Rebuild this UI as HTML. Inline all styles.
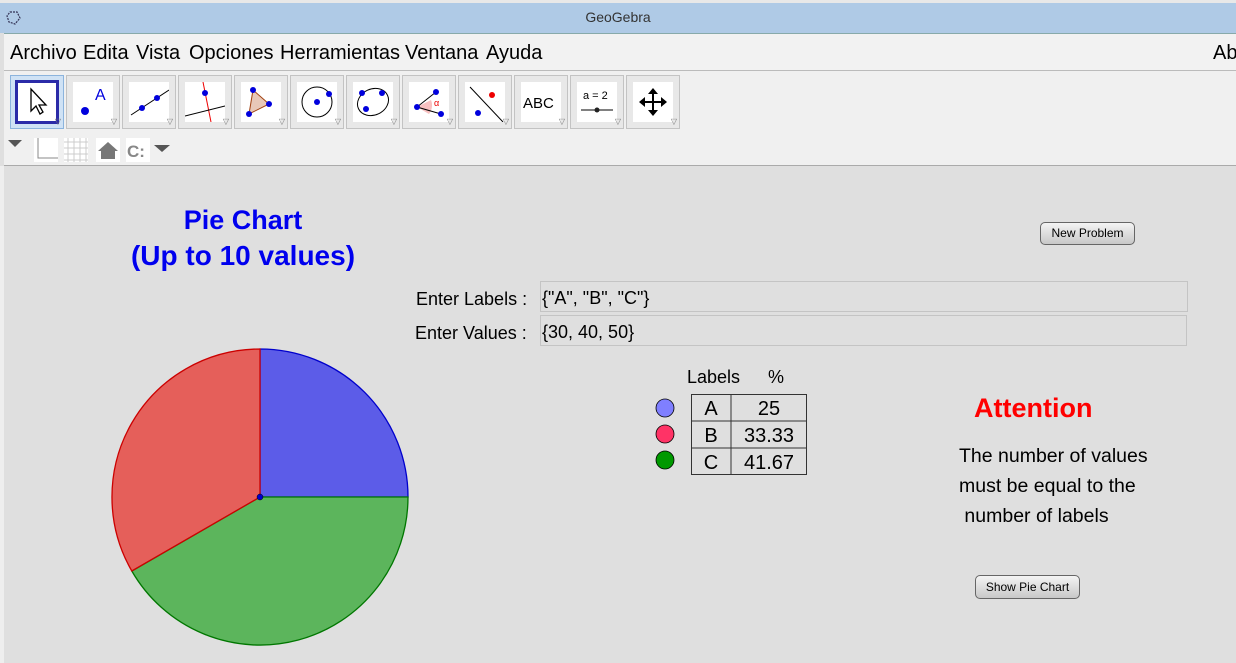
<!DOCTYPE html>
<html><head><meta charset="utf-8"><style>
*{margin:0;padding:0;box-sizing:border-box}
body{width:1236px;height:663px;overflow:hidden;background:#dfdfdf;font-family:"Liberation Sans",sans-serif;position:relative}
.a{position:absolute}
.m{position:absolute;top:42px;font-size:20px;color:#000}
.tb{position:absolute;top:75px;width:54px;height:54px;border:1px solid #c3c3c3;background:#e8e8e8}
.tb .in{position:absolute;left:6px;top:6px;width:40px;height:40px;background:#fff}
.tb .tri{position:absolute;right:2px;bottom:2px;font-size:8px;color:#777}
.tb svg{position:absolute;left:6px;top:6px}
</style></head><body>
<div class="a" style="left:0;top:0;width:1236px;height:33px;background:#afcae6;border-top:3px solid #e8e8e8"></div>
<div class="a" style="left:0;top:9px;width:1236px;text-align:center;font-size:14px;color:#333">GeoGebra</div>
<svg class="a" style="left:6px;top:10px" width="16" height="16"><polygon points="4,2 11,2 14,8 9,14 3,12 1,6" fill="none" stroke="#335" stroke-width="1.2" stroke-dasharray="2 1"/></svg>
<div class="a" style="left:4px;top:33px;width:1232px;height:37px;background:#f2f2f2;border-top:1px solid #8aa"></div>
<span class="m" style="left:10px">Archivo</span><span class="m" style="left:83px">Edita</span><span class="m" style="left:136px">Vista</span><span class="m" style="left:189px">Opciones</span><span class="m" style="left:280px">Herramientas</span><span class="m" style="left:405px">Ventana</span><span class="m" style="left:486px">Ayuda</span>
<span class="m" style="left:1213px">Ab</span>
<div class="a" style="left:4px;top:70px;width:1232px;height:62px;background:#f0f0f0;border-top:1px solid #bbb"></div>
<div class="tb" style="left:10px;background:#cfe2f5;border-color:#8cb4dd"><div class="in" style="left:4px;top:4px;width:44px;height:44px;border:3px solid #2b2ba8"></div><svg width="40" height="40" style="left:6px;top:6px"><path d="M14,7 L14,29 L19,24 L23,32 L26,30 L22,23 L29,23 Z" fill="#fff" stroke="#000" stroke-width="1.3"/></svg><span class="tri">▽</span></div>
<div class="tb" style="left:66px"><div class="in"></div><svg width="40" height="40"><circle cx="12" cy="29" r="4" fill="#00d"/><text x="22" y="18" font-size="16" fill="#00d" font-family="Liberation Sans">A</text></svg><span class="tri">▽</span></div>
<div class="tb" style="left:122px"><div class="in"></div><svg width="40" height="40"><line x1="2" y1="33" x2="40" y2="8" stroke="#000"/><circle cx="13" cy="26" r="3" fill="#00d"/><circle cx="28" cy="16" r="3" fill="#00d"/></svg><span class="tri">▽</span></div>
<div class="tb" style="left:178px"><div class="in"></div><svg width="40" height="40"><line x1="18" y1="0" x2="26" y2="40" stroke="#e00"/><line x1="0" y1="34" x2="40" y2="24" stroke="#000"/><circle cx="20" cy="11" r="3" fill="#00d"/></svg><span class="tri">▽</span></div>
<div class="tb" style="left:234px"><div class="in"></div><svg width="40" height="40"><polygon points="12,8 28,22 8,32" fill="#e8c8b8" stroke="#a04010"/><circle cx="12" cy="8" r="3" fill="#00d"/><circle cx="28" cy="22" r="3" fill="#00d"/><circle cx="8" cy="32" r="3" fill="#00d"/></svg><span class="tri">▽</span></div>
<div class="tb" style="left:290px"><div class="in"></div><svg width="40" height="40"><circle cx="20" cy="20" r="15" fill="none" stroke="#000"/><circle cx="20" cy="20" r="3" fill="#00d"/><circle cx="32" cy="12" r="3" fill="#00d"/></svg><span class="tri">▽</span></div>
<div class="tb" style="left:346px"><div class="in"></div><svg width="40" height="40"><ellipse cx="20" cy="20" rx="16" ry="13" fill="none" stroke="#000" transform="rotate(-25 20 20)"/><circle cx="9" cy="11" r="3" fill="#00d"/><circle cx="29" cy="11" r="3" fill="#00d"/><circle cx="13" cy="27" r="3" fill="#00d"/></svg><span class="tri">▽</span></div>
<div class="tb" style="left:402px"><div class="in"></div><svg width="40" height="40"><path d="M8,25 L20,32 A14,14 0 0 0 22,18 Z" fill="#f8c0c0"/><polyline points="27,10 8,25 32,32" fill="none" stroke="#000"/><circle cx="27" cy="10" r="3" fill="#00d"/><circle cx="8" cy="25" r="3" fill="#00d"/><circle cx="32" cy="32" r="3" fill="#00d"/><text x="25" y="24" font-size="9" fill="#e00">α</text></svg><span class="tri">▽</span></div>
<div class="tb" style="left:458px"><div class="in"></div><svg width="40" height="40"><line x1="5" y1="5" x2="38" y2="40" stroke="#000"/><circle cx="27" cy="13" r="3" fill="#e00"/><circle cx="13" cy="31" r="3" fill="#00d"/></svg><span class="tri">▽</span></div>
<div class="tb" style="left:514px"><div class="in"></div><svg width="40" height="40"><text x="2" y="26" font-size="15" font-family="Liberation Sans">ABC</text></svg><span class="tri">▽</span></div>
<div class="tb" style="left:570px"><div class="in"></div><svg width="40" height="40"><text x="6" y="17" font-size="11" font-family="Liberation Sans">a = 2</text><line x1="4" y1="28" x2="36" y2="28" stroke="#000"/><circle cx="20" cy="28" r="2.5" fill="#222"/></svg><span class="tri">▽</span></div>
<div class="tb" style="left:626px"><div class="in"></div><svg width="40" height="40"><path d="M20,6 L25,12 L21,12 L21,19 L28,19 L28,15 L34,20 L28,25 L28,21 L21,21 L21,28 L25,28 L20,34 L15,28 L19,28 L19,21 L12,21 L12,25 L6,20 L12,15 L12,19 L19,19 L19,12 L15,12 Z" fill="#000"/></svg><span class="tri">▽</span></div>
<div class="a" style="left:4px;top:132px;width:1232px;height:34px;background:#f0f0f0;border-bottom:1px solid #aaa"></div>
<svg class="a" style="left:8px;top:138px" width="170" height="24"><polygon points="0,2 14,2 7,9" fill="#555"/><rect x="26" y="0" width="24" height="24" fill="#fff"/><polyline points="30,0 30,20 50,20" fill="none" stroke="#888"/><rect x="56" y="0" width="24" height="24" fill="#fff"/><path d="M60,0v24M66,0v24M72,0v24M78,0v24M56,4h24M56,10h24M56,16h24M56,22h24" stroke="#ccc"/><rect x="88" y="0" width="24" height="24" fill="#fff"/><path d="M100,4 L110,13 L107,13 L107,21 L93,21 L93,13 L90,13 Z" fill="#777"/><rect x="118" y="0" width="24" height="24" fill="#fff"/><text x="119" y="19" font-size="17" font-weight="bold" fill="#888" font-family="Liberation Sans">C:</text><polygon points="146,7 162,7 154,14" fill="#555"/></svg>
<div class="a" style="left:0;top:166px;width:4px;height:497px;background:#eee"></div>
<div class="a" style="left:90px;top:202px;width:306px;text-align:center;color:#0000ee;font-weight:bold;font-size:27px;line-height:36px">Pie Chart<br><span style="font-size:28px">(Up to 10 values)</span></div>
<svg class="a" style="left:0;top:0" width="420" height="663"><path d="M260,497 L260,349 A148,148 0 0 1 408,497 Z" fill="#5c5ce8" stroke="#0000cc" stroke-width="1.3"/><path d="M260,497 L408,497 A148,148 0 0 1 131.8,571 Z" fill="#5cb55c" stroke="#007700" stroke-width="1.3"/><path d="M260,497 L131.8,571 A148,148 0 0 1 260,349 Z" fill="#e55f5a" stroke="#cc0000" stroke-width="1.3"/><circle cx="260" cy="497" r="3" fill="#00c" stroke="#000" stroke-width=".5"/></svg>
<div class="a" style="left:1040px;top:222px;width:95px;height:23px;border:1px solid #666;border-radius:5px;background:linear-gradient(#f4f4f4,#c8c8c8);font-size:12px;text-align:center;line-height:21px">New Problem</div>
<div class="a" style="left:416px;top:289px;font-size:18px">Enter Labels :</div>
<div class="a" style="left:415px;top:323px;font-size:18px">Enter Values :</div>
<div class="a" style="left:540px;top:281px;width:648px;height:31px;border:1px solid #c4c4c4;font-size:18px;line-height:33px;padding-left:1px">{"A", "B", "C"}</div>
<div class="a" style="left:540px;top:315px;width:647px;height:31px;border:1px solid #c4c4c4;font-size:18px;line-height:33px;padding-left:1px">{30, 40, 50}</div>
<div class="a" style="left:687px;top:367px;font-size:18px">Labels</div>
<div class="a" style="left:768px;top:367px;font-size:18px">%</div>
<svg class="a" style="left:650px;top:394px" width="170" height="84"><circle cx="15" cy="14" r="9" fill="#7f7fff" stroke="#000" stroke-width=".8"/><circle cx="15" cy="40" r="9" fill="#ff3366" stroke="#000" stroke-width=".8"/><circle cx="15" cy="66" r="9" fill="#009900" stroke="#000" stroke-width=".8"/><rect x="41.5" y=".5" width="115" height="80" fill="none" stroke="#333"/><path d="M41,27h116M41,54h116M81,0v81" stroke="#333"/><g font-family="Liberation Sans, sans-serif" font-size="20" text-anchor="middle"><text x="61" y="21">A</text><text x="61" y="48">B</text><text x="61" y="75">C</text><text x="119" y="21">25</text><text x="119" y="48">33.33</text><text x="119" y="75">41.67</text></g></svg>
<div class="a" style="left:974px;top:393px;font-size:27px;font-weight:bold;color:#ff0000">Attention</div>
<div class="a" style="left:959px;top:441px;font-size:19.5px;line-height:30px;white-space:pre">The number of values
must be equal to the
 number of labels</div>
<div class="a" style="left:975px;top:575px;width:105px;height:24px;border:1px solid #666;border-radius:5px;background:linear-gradient(#f4f4f4,#c8c8c8);font-size:12px;text-align:center;line-height:22px">Show Pie Chart</div>
</body></html>
